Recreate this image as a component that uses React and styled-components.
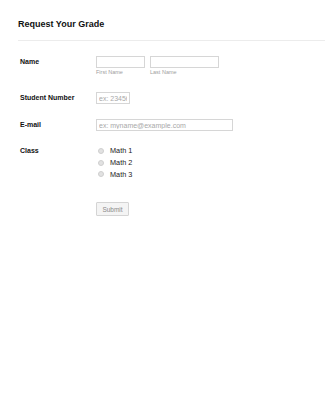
import React from "react";
import styled, { createGlobalStyle } from "styled-components";

const Global = createGlobalStyle`
  html, body { margin: 0; padding: 0; background: #fff; }
  body { font-family: "Liberation Sans", Arial, sans-serif; color: #000; }
  * { box-sizing: border-box; }
`;

const Page = styled.div`
  width: 325px;
  height: 400px;
  background: #fff;
  overflow: hidden;
`;

const Header = styled.div`
  margin-left: 18px;
  padding: 18px 0 10px 0;
  border-bottom: 1px solid #ececec;
`;

const Title = styled.h1`
  margin: 0;
  font-size: 9px;
  line-height: 12px;
  font-weight: bold;
  color: #111;
`;

const Form = styled.form`
  padding-left: 20px;
  display: flex;
  flex-direction: column;
`;

const Row = styled.div`
  display: flex;
  align-items: flex-start;
  margin-top: ${(p) => p.$top}px;
`;

const Label = styled.label`
  width: 76px;
  flex: none;
  font-size: 7px;
  line-height: 10px;
  padding-top: 1px;
  font-weight: bold;
  color: #111;
`;

const Fields = styled.div`
  display: flex;
  gap: 5px;
`;

const Field = styled.div`
  display: flex;
  flex-direction: column;
`;

const Input = styled.input`
  width: ${(p) => p.$w}px;
  height: 12px;
  border: 1px solid #d6d6d6;
  border-radius: 0;
  padding: 0 2px;
  margin: 0;
  font-family: "Liberation Sans", Arial, sans-serif;
  font-size: 7px;
  color: #333;
  background: #fff;
  outline: none;
  &::placeholder { color: #a8a8a8; }
`;

const SubLabel = styled.span`
  margin-top: 1px;
  font-size: 5.5px;
  line-height: 7px;
  color: #a0a0a0;
`;

const RadioList = styled.div`
  display: flex;
  flex-direction: column;
`;

const RadioItem = styled.label`
  display: flex;
  align-items: center;
  height: 11.7px;
  font-size: 7.3px;
  color: #222;
`;

const Radio = styled.input.attrs({ type: "radio" })`
  appearance: none;
  -webkit-appearance: none;
  width: 6px;
  height: 6px;
  margin: 0 6px 0 2px;
  border-radius: 50%;
  border: 1px solid #cfcfcf;
  background: #e2e2e2;
  flex: none;
`;

const Submit = styled.button`
  margin-left: 76px;
  width: 33px;
  height: 14px;
  padding: 0;
  border: 1px solid #d4d4d4;
  border-radius: 1px;
  background: #f4f4f4;
  color: #8a8a8a;
  font-family: "Liberation Sans", Arial, sans-serif;
  font-size: 6.5px;
`;

export default function App() {
  return (
    <Page>
      <Global />
      <Header>
        <Title>Request Your Grade</Title>
      </Header>
      <Form onSubmit={(e) => e.preventDefault()}>
        <Row $top={15}>
          <Label>Name</Label>
          <Fields>
            <Field>
              <Input $w={49} />
              <SubLabel>First Name</SubLabel>
            </Field>
            <Field>
              <Input $w={69} />
              <SubLabel>Last Name</SubLabel>
            </Field>
          </Fields>
        </Row>
        <Row $top={16}>
          <Label>Student Number</Label>
          <Input $w={34} placeholder="ex: 23456" />
        </Row>
        <Row $top={15}>
          <Label>E-mail</Label>
          <Input $w={137} placeholder="ex: myname@example.com" />
        </Row>
        <Row $top={14}>
          <Label>Class</Label>
          <RadioList>
            <RadioItem><Radio name="cls" />Math 1</RadioItem>
            <RadioItem><Radio name="cls" />Math 2</RadioItem>
            <RadioItem><Radio name="cls" />Math 3</RadioItem>
          </RadioList>
        </Row>
        <Row $top={22}>
          <Submit type="submit">Submit</Submit>
        </Row>
      </Form>
    </Page>
  );
}
